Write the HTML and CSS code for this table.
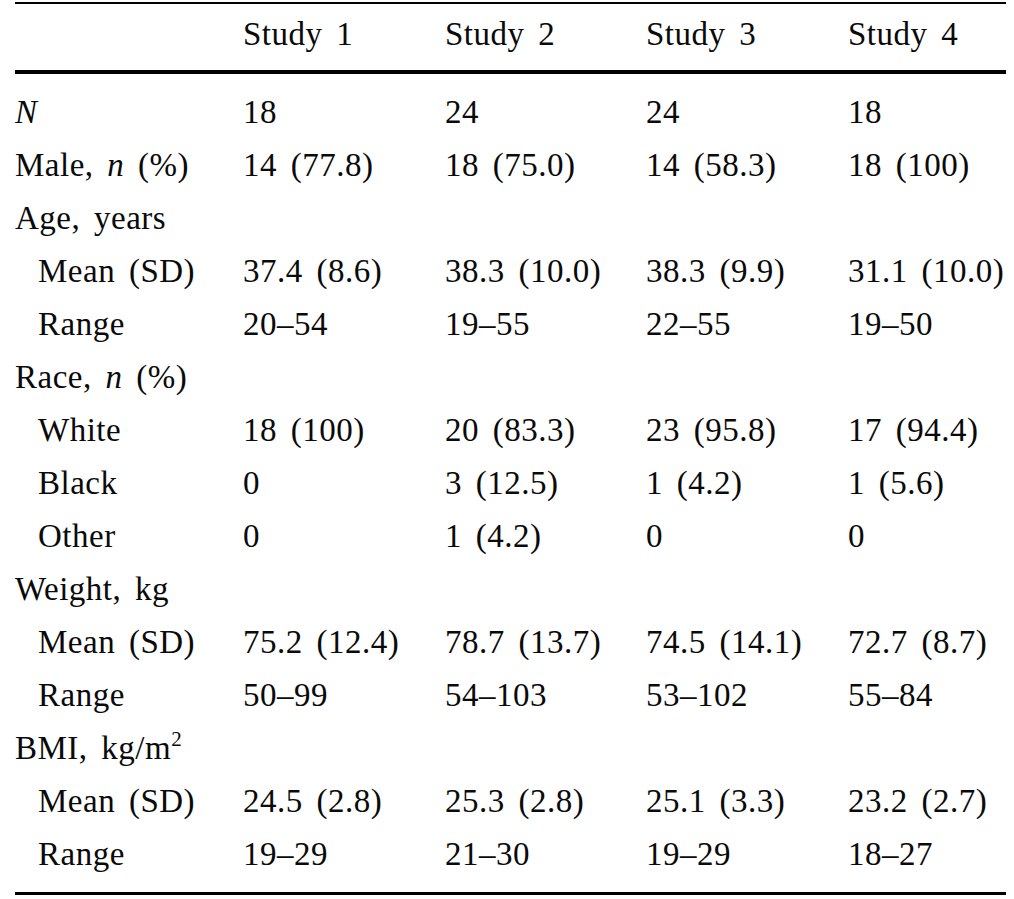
FILE: index.html
```html
<!DOCTYPE html>
<html>
<head>
<meta charset="utf-8">
<link rel="stylesheet" href="styles.css">
</head>
<body>
<table class="demo">
  <thead>
    <tr>
      <th class="label"></th>
      <th>Study 1</th>
      <th>Study 2</th>
      <th>Study 3</th>
      <th>Study 4</th>
    </tr>
  </thead>
  <tbody>
    <tr class="first"><td class="label"><i>N</i></td><td>18</td><td>24</td><td>24</td><td>18</td></tr>
    <tr><td class="label">Male, <i>n</i> (%)</td><td>14 (77.8)</td><td>18 (75.0)</td><td>14 (58.3)</td><td>18 (100)</td></tr>
    <tr><td class="label">Age, years</td><td></td><td></td><td></td><td></td></tr>
    <tr><td class="label sub">Mean (SD)</td><td>37.4 (8.6)</td><td>38.3 (10.0)</td><td>38.3 (9.9)</td><td>31.1 (10.0)</td></tr>
    <tr><td class="label sub">Range</td><td>20–54</td><td>19–55</td><td>22–55</td><td>19–50</td></tr>
    <tr><td class="label">Race, <i>n</i> (%)</td><td></td><td></td><td></td><td></td></tr>
    <tr><td class="label sub">White</td><td>18 (100)</td><td>20 (83.3)</td><td>23 (95.8)</td><td>17 (94.4)</td></tr>
    <tr><td class="label sub">Black</td><td>0</td><td>3 (12.5)</td><td>1 (4.2)</td><td>1 (5.6)</td></tr>
    <tr><td class="label sub">Other</td><td>0</td><td>1 (4.2)</td><td>0</td><td>0</td></tr>
    <tr><td class="label">Weight, kg</td><td></td><td></td><td></td><td></td></tr>
    <tr><td class="label sub">Mean (SD)</td><td>75.2 (12.4)</td><td>78.7 (13.7)</td><td>74.5 (14.1)</td><td>72.7 (8.7)</td></tr>
    <tr><td class="label sub">Range</td><td>50–99</td><td>54–103</td><td>53–102</td><td>55–84</td></tr>
    <tr><td class="label">BMI, kg/m<sup>2</sup></td><td></td><td></td><td></td><td></td></tr>
    <tr><td class="label sub">Mean (SD)</td><td>24.5 (2.8)</td><td>25.3 (2.8)</td><td>25.1 (3.3)</td><td>23.2 (2.7)</td></tr>
    <tr class="last"><td class="label sub">Range</td><td>19–29</td><td>21–30</td><td>19–29</td><td>18–27</td></tr>
  </tbody>
</table>
</body>
</html>
```
FILE: styles.css
```css
html, body {
  margin: 0;
  padding: 0;
  background: #ffffff;
}
body {
  padding: 2px 0 0 15px;
}
.demo {
  border-collapse: collapse;
  table-layout: fixed;
  width: 991px;
  font-family: "Liberation Serif", "Times New Roman", serif;
  font-size: 33px;
  color: #0a0a0a;
  border-top: 2px solid #000;
  border-bottom: 3px solid #000;
  letter-spacing: 0.5px;
  word-spacing: 5px;
}
.demo th, .demo td {
  padding: 0;
  height: 53px;
  line-height: 53px;
  text-align: left;
  font-weight: normal;
  white-space: nowrap;
  vertical-align: top;
}
.demo th.label, .demo td.label { width: 228px; }
.demo th:nth-child(2), .demo td:nth-child(2) { width: 202px; }
.demo th:nth-child(3), .demo td:nth-child(3) { width: 201px; }
.demo th:nth-child(4), .demo td:nth-child(4) { width: 202px; }
.demo thead th {
  padding-top: 4px;
  padding-bottom: 9px;
  border-bottom: 4px solid #000;
}
.demo tr.first td { padding-top: 12px; }
.demo tr.last td { padding-bottom: 11px; }
.demo td.sub { padding-left: 23px; }
.demo sup {
  font-size: 21px;
  line-height: 0;
  vertical-align: 13px;
}
```
